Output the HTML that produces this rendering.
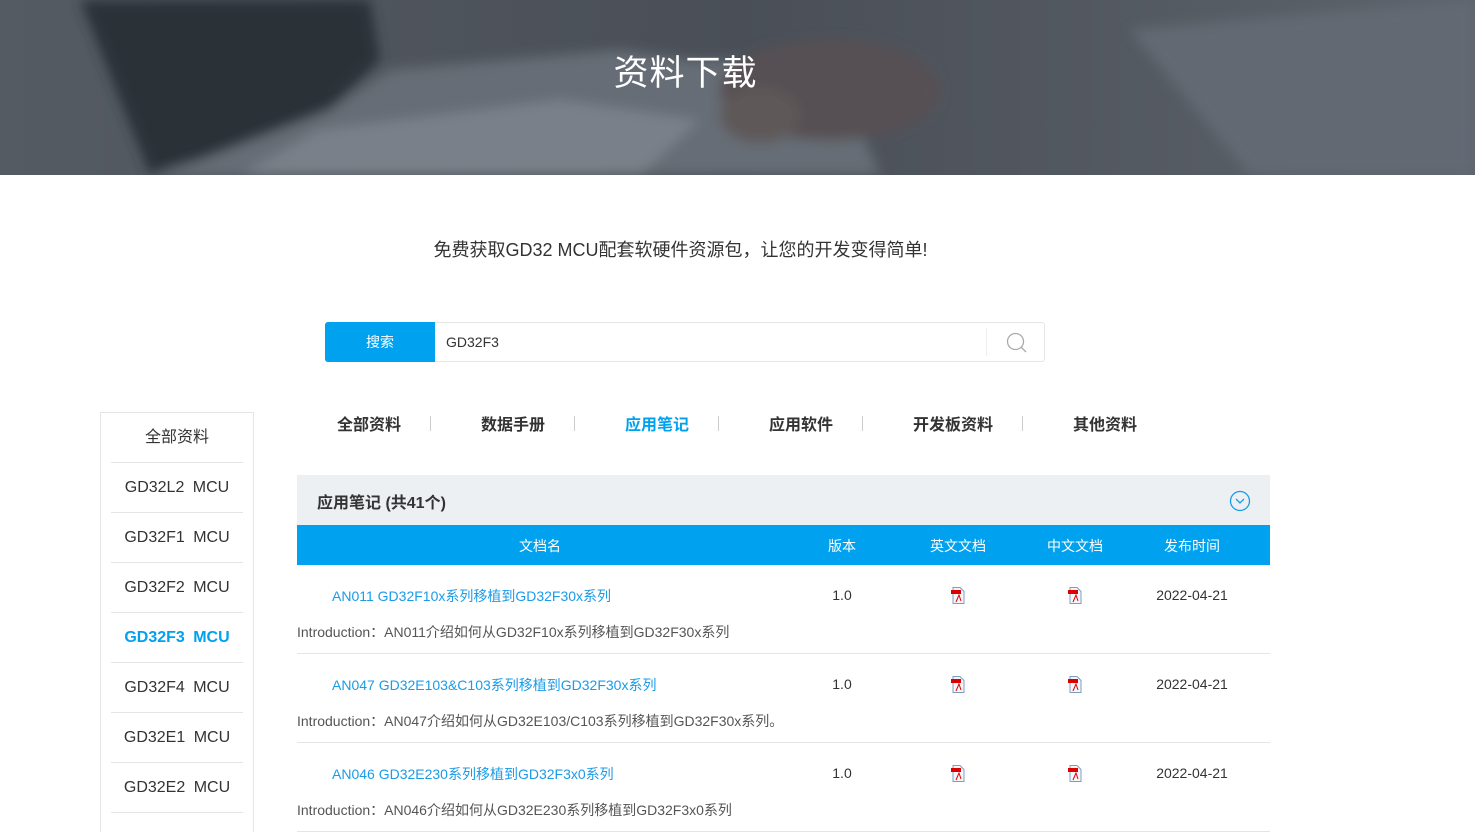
<!DOCTYPE html>
<html><head><meta charset="utf-8"><style>
*{margin:0;padding:0;box-sizing:border-box}
body{width:1475px;height:817px;overflow:hidden;background:#fff;font-family:"Liberation Sans","Noto Sans CJK SC",sans-serif;color:#333;position:relative}
.hero{position:absolute;left:0;top:0;width:1475px;height:175px;background:#4d535c;overflow:hidden}
.hero h1{position:absolute;left:0;right:0;top:45px;text-align:center;color:#fff;font-size:35px;font-weight:normal;letter-spacing:1px;padding-right:104px}
.abs{position:absolute}
.sub{left:0;right:0;top:236px;text-align:center;font-size:18px;color:#333;padding-right:114px}
.search{left:325px;top:322px;width:720px;height:40px;border:1px solid #e6e6e6;border-radius:3px}
.sbtn{position:absolute;left:-1px;top:-1px;width:110px;height:40px;background:#00a2f0;color:#fff;font-size:14px;text-align:center;line-height:40px;border-radius:3px 0 0 3px}
.sval{position:absolute;left:120px;top:11px;font-size:14px}
.sdiv{position:absolute;left:660px;top:5px;width:1px;height:28px;background:#eee}
.side{left:100px;top:412px;width:154px;height:420px;border:1px solid #e5e5e5;border-bottom:none}
.side div{margin:0 10px;height:50px;border-bottom:1px solid #e5e5e5;text-align:center;line-height:50px;font-size:16px;color:#333;word-spacing:4px}
.side div.a{color:#00a2f0;font-weight:bold}
.tab{top:411px;font-size:16px;font-weight:bold;color:#333}
.sep{top:416px;width:1px;height:15px;background:#ccc}
.panel{left:297px;top:475px;width:973px;height:50px;background:#edf0f3}
.panel span{position:absolute;left:20px;top:14px;font-size:16px;font-weight:bold}
.th{left:297px;top:525px;width:973px;height:40px;background:#00a2f0;color:#fff;font-size:14px}
.th span,.row span{position:absolute;transform:translateX(-50%);white-space:nowrap}
.row{left:297px;width:973px;height:89px;border-bottom:1px solid #e5e5e5;font-size:14px}
.row .n{transform:none;left:35px;top:21px;color:#1a9be8}
.row .i{transform:none;left:0;top:57px;color:#555}
.pdf{position:absolute;top:22px;width:14px;height:17px;margin-left:-7px}
</style></head><body>
<div class="hero">
<svg width="1475" height="175" style="position:absolute;left:0;top:0">
<defs><linearGradient id="g" x1="0" x2="1"><stop offset="0" stop-color="#555b63"/><stop offset=".5" stop-color="#4a4f57"/><stop offset="1" stop-color="#5d636b"/></linearGradient>
<filter id="b" x="-20%" y="-20%" width="140%" height="140%"><feGaussianBlur stdDeviation="6"/></filter></defs>
<rect width="1475" height="175" fill="url(#g)"/>
<g filter="url(#b)">
<polygon points="80,0 370,0 380,60 330,110 200,160 150,175" fill="#2c3139"/>
<polygon points="150,175 200,160 330,110 390,70 620,50 690,60 830,60 880,175" fill="#666d76"/>
<polygon points="240,175 320,130 560,100 700,120 640,175" fill="#7a8089"/>
<ellipse cx="830" cy="90" rx="110" ry="50" fill="#575052"/>
<ellipse cx="760" cy="115" rx="40" ry="28" fill="#5f5859"/>
<polygon points="1130,30 1475,0 1475,175 1250,175" fill="#636973"/>
</g>
</svg>
<h1>资料下载</h1>
</div>
<div class="abs sub">免费获取GD32 MCU配套软硬件资源包，让您的开发变得简单!</div>
<div class="abs search"><div class="sbtn">搜索</div><div class="sval">GD32F3</div><div class="sdiv"></div>
<svg style="position:absolute;left:680px;top:9px" width="22" height="22" viewBox="0 0 22 22"><circle cx="9.5" cy="9.5" r="8" fill="none" stroke="#aaa" stroke-width="1.3"/><line x1="15" y1="15" x2="20" y2="20" stroke="#aaa" stroke-width="1.3"/></svg></div>
<div class="abs side">
<div>全部资料</div><div>GD32L2 MCU</div><div>GD32F1 MCU</div><div>GD32F2 MCU</div><div class="a">GD32F3 MCU</div><div>GD32F4 MCU</div><div>GD32E1 MCU</div><div>GD32E2 MCU</div></div>
<div class="abs tab" style="left:337px">全部资料</div><div class="abs sep" style="left:430px"></div>
<div class="abs tab" style="left:481px">数据手册</div><div class="abs sep" style="left:574px"></div>
<div class="abs tab" style="left:625px;color:#00a2f0">应用笔记</div><div class="abs sep" style="left:718px"></div>
<div class="abs tab" style="left:769px">应用软件</div><div class="abs sep" style="left:862px"></div>
<div class="abs tab" style="left:913px">开发板资料</div><div class="abs sep" style="left:1022px"></div>
<div class="abs tab" style="left:1073px">其他资料</div>
<div class="abs panel"><span>应用笔记 (共41个)</span>
<svg style="position:absolute;left:932px;top:15px" width="22" height="22"><circle cx="11" cy="11" r="9.5" fill="none" stroke="#1a9be8" stroke-width="1.3"/><polyline points="7,9 11,13 15,9" fill="none" stroke="#1a9be8" stroke-width="1.3"/></svg></div>
<div class="abs th"><span style="left:243px;top:11px">文档名</span><span style="left:545px;top:11px">版本</span><span style="left:661px;top:11px">英文文档</span><span style="left:778px;top:11px">中文文档</span><span style="left:895px;top:11px">发布时间</span></div>

<div class="abs row" style="top:565px"><span class="n">AN011 GD32F10x系列移植到GD32F30x系列</span><span style="left:545px;top:22px">1.0</span>
<svg class="pdf" style="left:661px" viewBox="0 0 14 17"><path d="M2 .5h7l4 4v12H2z" fill="#f4f6fa" stroke="#7f9cc0"/><rect x="0" y="3" width="10" height="4" fill="#d00"/><path d="M5 15l3-7 2 6" fill="none" stroke="#d00"/></svg>
<svg class="pdf" style="left:778px" viewBox="0 0 14 17"><path d="M2 .5h7l4 4v12H2z" fill="#f4f6fa" stroke="#7f9cc0"/><rect x="0" y="3" width="10" height="4" fill="#d00"/><path d="M5 15l3-7 2 6" fill="none" stroke="#d00"/></svg>
<span style="left:895px;top:22px">2022-04-21</span><span class="i">Introduction：AN011介绍如何从GD32F10x系列移植到GD32F30x系列</span></div>

<div class="abs row" style="top:654px"><span class="n">AN047 GD32E103&amp;C103系列移植到GD32F30x系列</span><span style="left:545px;top:22px">1.0</span>
<svg class="pdf" style="left:661px" viewBox="0 0 14 17"><path d="M2 .5h7l4 4v12H2z" fill="#f4f6fa" stroke="#7f9cc0"/><rect x="0" y="3" width="10" height="4" fill="#d00"/><path d="M5 15l3-7 2 6" fill="none" stroke="#d00"/></svg>
<svg class="pdf" style="left:778px" viewBox="0 0 14 17"><path d="M2 .5h7l4 4v12H2z" fill="#f4f6fa" stroke="#7f9cc0"/><rect x="0" y="3" width="10" height="4" fill="#d00"/><path d="M5 15l3-7 2 6" fill="none" stroke="#d00"/></svg>
<span style="left:895px;top:22px">2022-04-21</span><span class="i">Introduction：AN047介绍如何从GD32E103/C103系列移植到GD32F30x系列。</span></div>

<div class="abs row" style="top:743px"><span class="n">AN046 GD32E230系列移植到GD32F3x0系列</span><span style="left:545px;top:22px">1.0</span>
<svg class="pdf" style="left:661px" viewBox="0 0 14 17"><path d="M2 .5h7l4 4v12H2z" fill="#f4f6fa" stroke="#7f9cc0"/><rect x="0" y="3" width="10" height="4" fill="#d00"/><path d="M5 15l3-7 2 6" fill="none" stroke="#d00"/></svg>
<svg class="pdf" style="left:778px" viewBox="0 0 14 17"><path d="M2 .5h7l4 4v12H2z" fill="#f4f6fa" stroke="#7f9cc0"/><rect x="0" y="3" width="10" height="4" fill="#d00"/><path d="M5 15l3-7 2 6" fill="none" stroke="#d00"/></svg>
<span style="left:895px;top:22px">2022-04-21</span><span class="i">Introduction：AN046介绍如何从GD32E230系列移植到GD32F3x0系列</span></div>
</body></html>
